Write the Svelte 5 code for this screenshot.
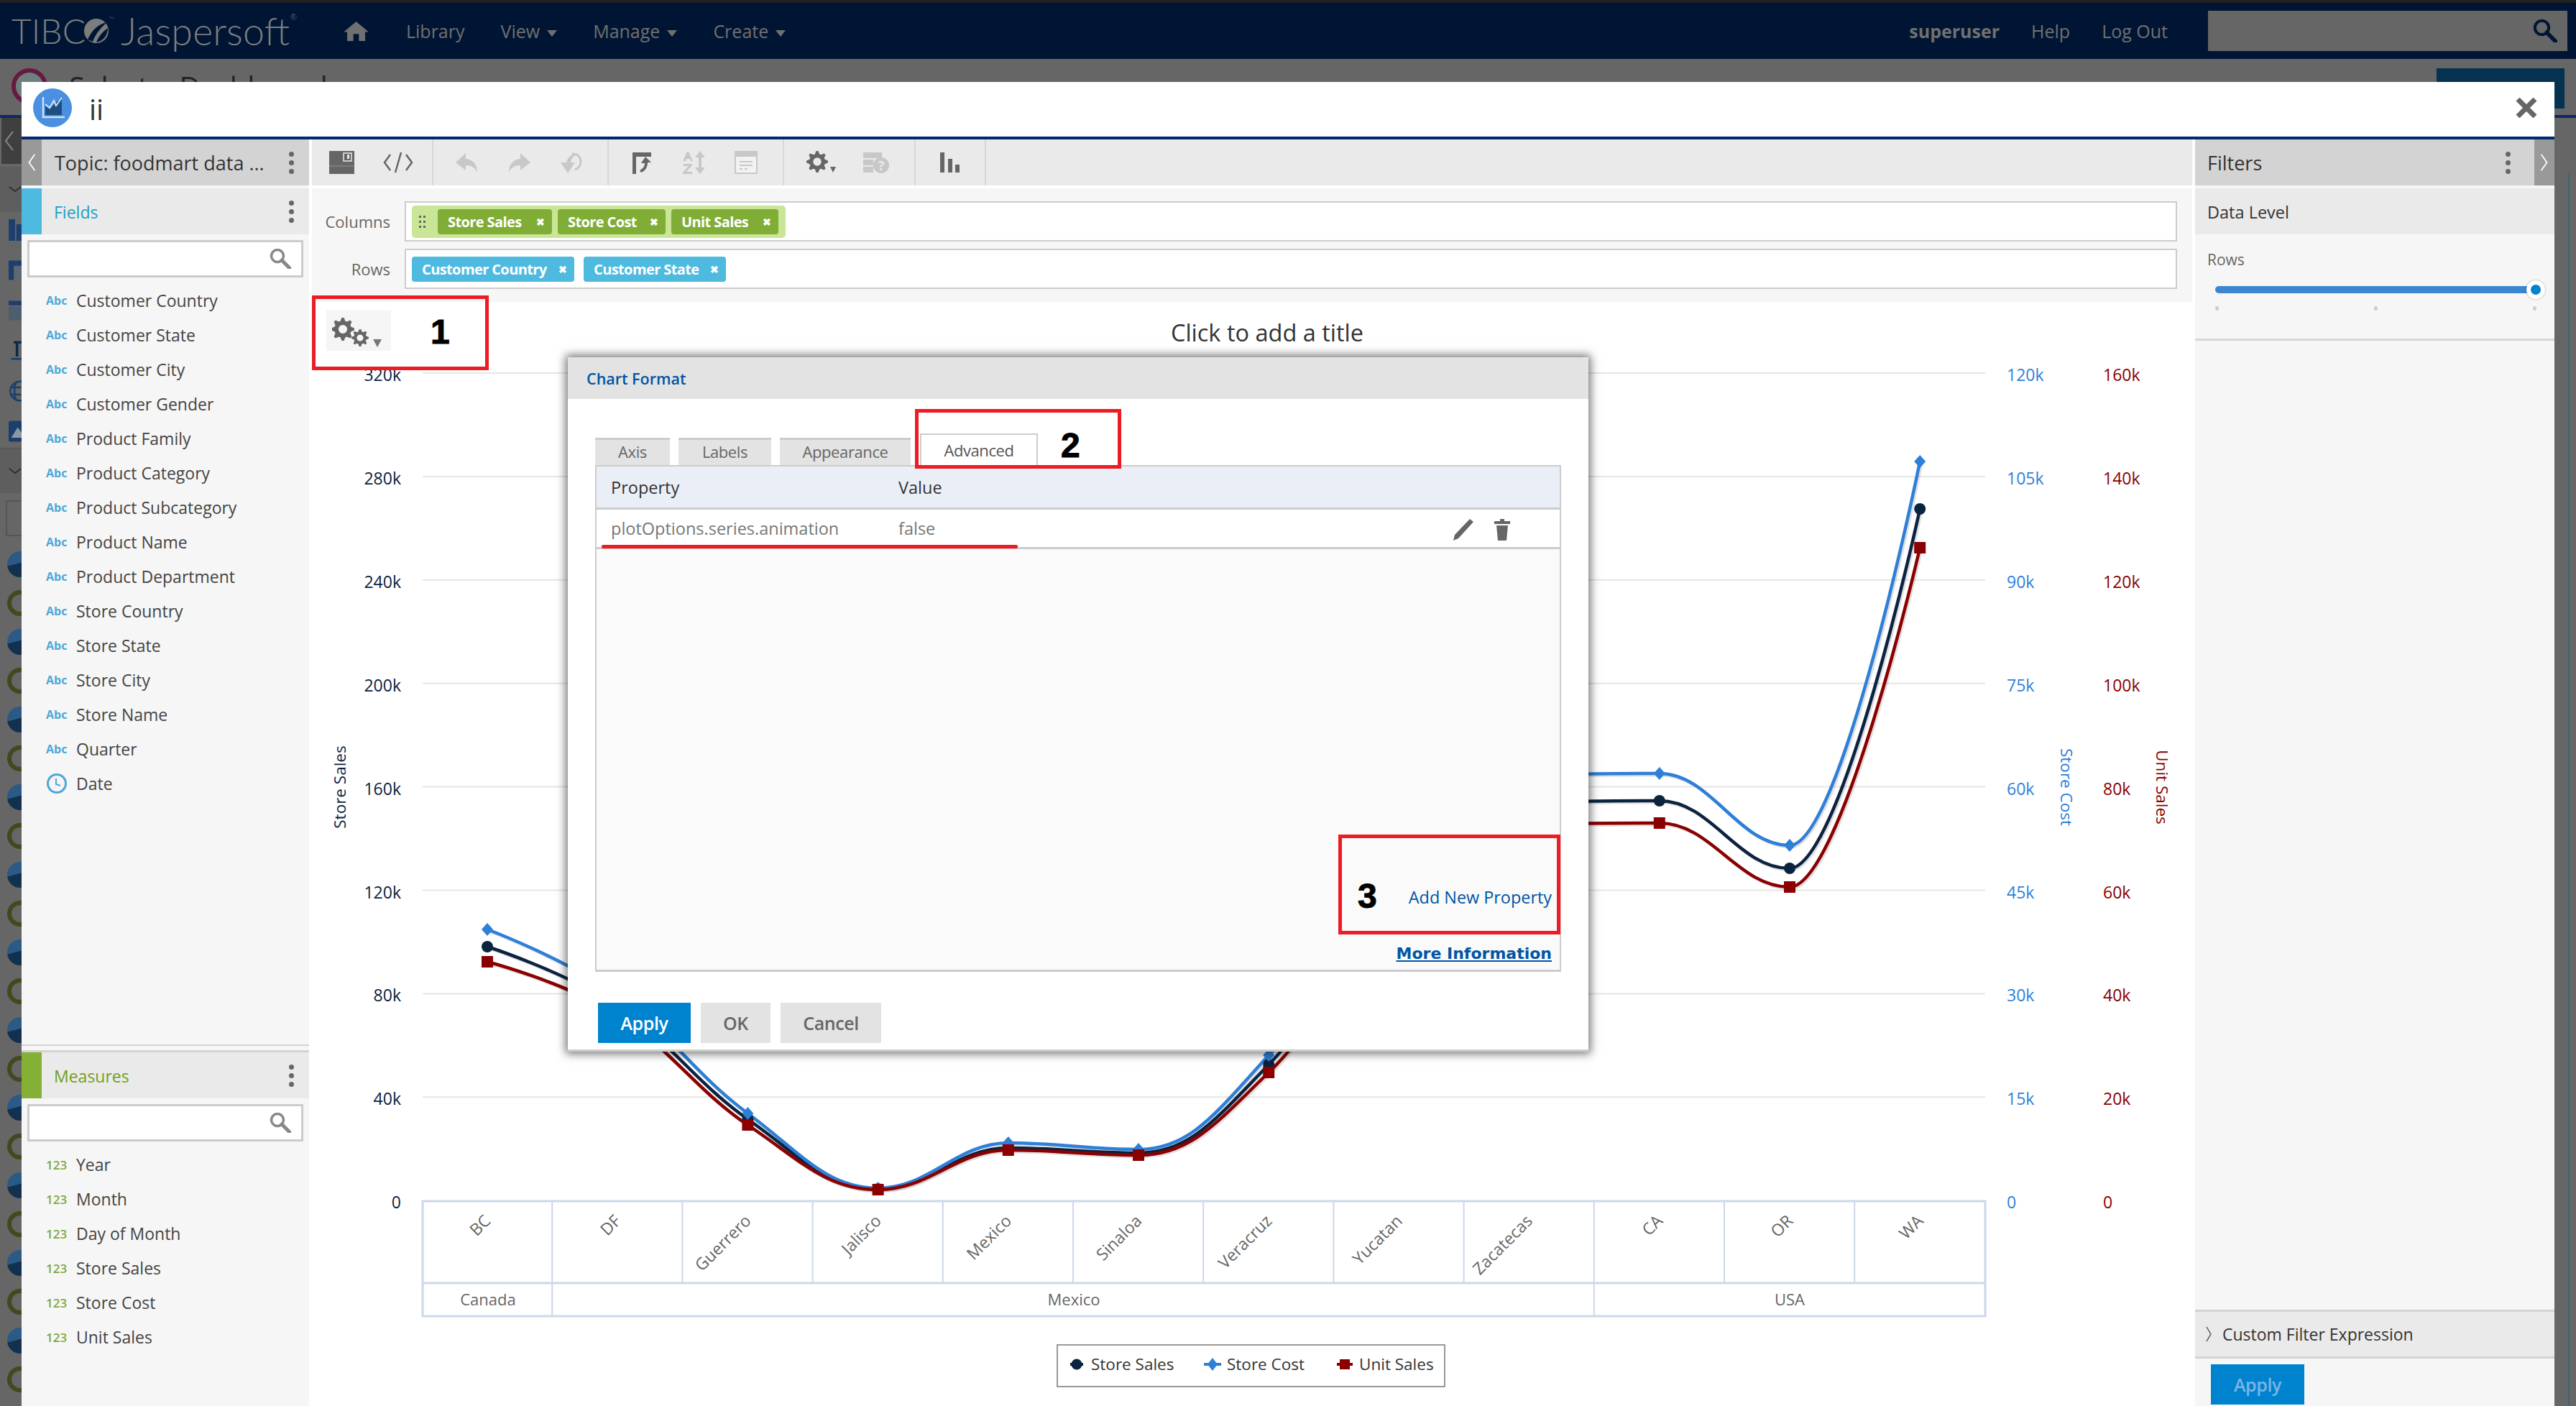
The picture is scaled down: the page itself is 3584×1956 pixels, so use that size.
<script>
  const dimensions = ['Customer Country','Customer State','Customer City','Customer Gender','Product Family','Product Category','Product Subcategory','Product Name','Product Department','Store Country','Store State','Store City','Store Name','Quarter'];
  const measures = ['Year','Month','Day of Month','Store Sales','Store Cost','Unit Sales'];
  const states = ['BC','DF','Guerrero','Jalisco','Mexico','Sinaloa','Veracruz','Yucatan','Zacatecas','CA','OR','WA'];

  const colW = 181.2;
  const xs = states.map((_, i) => 678 + colW * i);
  const gridY = Array.from({ length: 9 }, (_, i) => 519 + 143.9 * i);
  const leftTicks = ['320k','280k','240k','200k','160k','120k','80k','40k','0'];
  const blueTicks = ['120k','105k','90k','75k','60k','45k','30k','15k','0'];
  const redTicks = ['160k','140k','120k','100k','80k','60k','40k','20k','0'];

  const series = [
    { name: 'sales', color: '#0c2340', ys: [1317,1400,1557,1654,1597,1604,1481,1232,1118,1114,1208,708] },
    { name: 'cost', color: '#2e7fd8', ys: [1293,1385,1549,1653,1590,1599,1468,1205,1080,1076,1176,642] },
    { name: 'units', color: '#8b0000', ys: [1338,1412,1565,1655,1600,1607,1492,1258,1147,1145,1234,762] }
  ];

  // same control point maths as a highcharts spline
  function controls(ys, i) {
    const x = xs[i], y = ys[i], lx = xs[i - 1], ly = ys[i - 1], nx = xs[i + 1], ny = ys[i + 1];
    const leftX = (1.5 * x + lx) / 2.5, rightX = (1.5 * x + nx) / 2.5;
    let leftY = (1.5 * y + ly) / 2.5, rightY = (1.5 * y + ny) / 2.5;
    const fix = ((rightY - leftY) * (rightX - x)) / (rightX - leftX) + y - rightY;
    leftY += fix;
    rightY += fix;
    if (leftY > ly && leftY > y) { leftY = Math.max(ly, y); rightY = 2 * y - leftY; }
    else if (leftY < ly && leftY < y) { leftY = Math.min(ly, y); rightY = 2 * y - leftY; }
    if (rightY > ny && rightY > y) { rightY = Math.max(ny, y); leftY = 2 * y - rightY; }
    else if (rightY < ny && rightY < y) { rightY = Math.min(ny, y); leftY = 2 * y - rightY; }
    return { leftX, leftY, rightX, rightY };
  }

  function spline(ys) {
    let d = `M${xs[0]} ${ys[0]}`;
    for (let i = 1; i < xs.length; i++) {
      const a = i > 1 ? controls(ys, i - 1) : { rightX: xs[0], rightY: ys[0] };
      const b = i < xs.length - 1 ? controls(ys, i) : { leftX: xs[i], leftY: ys[i] };
      d += ` C${a.rightX.toFixed(1)} ${a.rightY.toFixed(1)} ${b.leftX.toFixed(1)} ${b.leftY.toFixed(1)} ${xs[i].toFixed(1)} ${ys[i]}`;
    }
    return d;
  }

  function gear(cx, cy, r, teeth) {
    const pts = [];
    for (let i = 0; i < teeth * 4; i++) {
      const a = (i / (teeth * 4)) * Math.PI * 2 - Math.PI / (teeth * 4);
      const rr = i % 4 < 2 ? r : r * 0.74;
      pts.push(`${(cx + rr * Math.cos(a)).toFixed(1)} ${(cy + rr * Math.sin(a)).toFixed(1)}`);
    }
    const h = r * 0.38;
    return `M${pts.join('L')}Z M${cx - h} ${cy}a${h} ${h} 0 1 0 ${h * 2} 0a${h} ${h} 0 1 0 ${-h * 2} 0Z`;
  }

  const behindIcons = Array.from({ length: 22 }, (_, i) => (i % 2 ? 'olive' : 'hill'));
</script>

{#snippet kebab()}
  <span class="kebab"><i></i><i></i><i></i></span>
{/snippet}

{#snippet searchIcon(cls)}
  <svg class={cls} viewBox="0 0 30 28">
    <circle cx="11" cy="10" r="8.5" fill="none" stroke="currentColor" stroke-width="3.5" />
    <path d="M17 16l11 11" stroke="currentColor" stroke-width="5" stroke-linecap="round" />
  </svg>
{/snippet}

{#snippet searchBox()}
  <div class="search">{@render searchIcon('search-glyph')}</div>
{/snippet}

<div class="page">
  <header class="nav">
    <div class="logo">
      <span>TIBC</span>
      <svg class="logo-o" viewBox="0 0 36 36">
        <circle cx="18" cy="18" r="17" fill="#7d7d7d" />
        <path d="M6 30C12 16 22 8 33 6C26 12 18 20 13 33ZM18 34C21 26 26 20 34 14C34 24 28 32 18 34Z" fill="#001534" />
      </svg>
      <sup class="tm">™</sup>
      <span class="logo-j">Jaspersoft</span>
      <sup class="reg">®</sup>
    </div>
    <svg class="home" viewBox="0 0 36 28"><path d="M18 0L36 15H31V28H22V18H14V28H5V15H0Z" fill="#707070" /></svg>
    <nav class="menu">
      <span>Library</span>
      <span>View<b class="caret"></b></span>
      <span>Manage<b class="caret"></b></span>
      <span>Create<b class="caret"></b></span>
    </nav>
    <div class="user">
      <strong>superuser</strong>
      <span>Help</span>
      <span>Log Out</span>
    </div>
    <div class="nav-search">{@render searchIcon('nav-glyph')}</div>
  </header>

  <div class="stage">
    <div class="behind">
      <div class="behind-head">
        <span class="behind-logo"></span>
        <span class="behind-title">Select a Dashboard</span>
        <span class="behind-btn"></span>
      </div>
      <div class="behind-strip">
        <div class="behind-handle"><svg viewBox="0 0 14 30"><path d="M12 2L2 15l10 13" fill="none" stroke="#8a8a8a" stroke-width="2" /></svg></div>
        <div class="behind-row"><svg viewBox="0 0 20 10"><path d="M1 1l9 7 9-7" fill="none" stroke="#2b2b2b" stroke-width="2" /></svg></div>
        <div class="widget-icons">
          <svg viewBox="0 0 20 34"><path d="M0 0h10v34H0zM12 8h8v26h-8z" fill="#1c3f6e" /></svg>
          <svg viewBox="0 0 20 30"><path d="M0 0h20v8H8v22H0z" fill="#1c3f6e" /><path d="M10 10h10v18H10z" fill="#5b6877" /></svg>
          <svg viewBox="0 0 20 30"><path d="M0 0h20v7H0z" fill="#1c3f6e" /><path d="M0 9h20v21H0z" fill="#4f5d6e" /></svg>
          <svg viewBox="0 0 20 30"><path d="M8 0h12v4h-5v20h-4V4H8z" fill="#12284a" /><path d="M4 26h16v3H4z" fill="#1c3f6e" /></svg>
          <svg viewBox="0 0 20 36"><circle cx="18" cy="18" r="16" fill="none" stroke="#1c3f6e" stroke-width="3" /><path d="M2 12h18M2 24h18M12 2C8 12 8 24 12 34" fill="none" stroke="#1c3f6e" stroke-width="3" /></svg>
          <svg viewBox="0 0 20 32"><path d="M2 0h18v32H2a2 2 0 0 1-2-2V2a2 2 0 0 1 2-2z" fill="#1c3f6e" /><path d="M4 26L14 10l6 8v8z" fill="#8b97a3" /></svg>
        </div>
        <div class="behind-row second"><svg viewBox="0 0 20 10"><path d="M1 1l9 7 9-7" fill="none" stroke="#2b2b2b" stroke-width="2" /></svg></div>
        <div class="behind-search"></div>
        <div class="resource-icons">
          {#each behindIcons as kind}
            <span class={kind}></span>
          {/each}
        </div>
      </div>
      <div class="behind-right"></div>
    </div>

    <section class="modal">
      <div class="modal-head">
        <svg class="report-icon" viewBox="0 0 54 54">
          <circle cx="27" cy="27" r="27" fill="#4a8fe0" />
          <path d="M14 12v28h30" fill="none" stroke="#cfe0f4" stroke-width="2.5" />
          <path d="M17 37V24l6 5 8-9 9-6v23z" fill="#1f4f80" />
          <path d="M17 22l6 5 6-10 3 7 8-11" fill="none" stroke="#cfe6fb" stroke-width="2" />
        </svg>
        <span class="modal-title">ii</span>
        <svg class="close" viewBox="0 0 30 28"><path d="M3 2l24 24M27 2L3 26" stroke="#666" stroke-width="7" /></svg>
      </div>

      <div class="designer">
        <aside class="left">
          <div class="panel-top">
            <span class="handle"><svg viewBox="0 0 14 30"><path d="M12 2L3 15l9 13" fill="none" stroke="#fff" stroke-width="2" /></svg></span>
            <span class="panel-name">Topic: foodmart data ...</span>
            {@render kebab()}
          </div>
          <div class="fields">
            <div class="section-head"><span class="strip"></span><span class="section-name blue">Fields</span>{@render kebab()}</div>
            {@render searchBox()}
            <ul class="list">
              {#each dimensions as item}
                <li><span class="kind abc">Abc</span>{item}</li>
              {/each}
              <li>
                <svg class="clock" viewBox="0 0 30 30"><circle cx="15" cy="15" r="12.5" fill="none" stroke="#4ba8d8" stroke-width="3" /><path d="M14 8v8l6 2" fill="none" stroke="#4ba8d8" stroke-width="2" /></svg>Date
              </li>
            </ul>
          </div>
          <div class="measures">
            <div class="section-head"><span class="strip green"></span><span class="section-name olive-text">Measures</span>{@render kebab()}</div>
            {@render searchBox()}
            <ul class="list">
              {#each measures as item}
                <li><span class="kind num">123</span>{item}</li>
              {/each}
            </ul>
          </div>
        </aside>

        <main class="center">
          <div class="toolbar">
            <div class="tool-group first">
              <svg class="t-save" viewBox="0 0 35 32"><path d="M0 0h35v32H0z" fill="#666" /><path d="M20 3h11v11H20z" fill="none" stroke="#eaeaea" stroke-width="1.500" /><path d="M25 5h3v6h-3z" fill="#eaeaea" /><path d="M0 21h35" stroke="#7b7b7b" stroke-width="2" /></svg>
              <svg class="t-code" viewBox="0 0 42 32"><path d="M10 5L2 16l8 11M32 5l8 11-8 11M25 2l-8 28" fill="none" stroke="#666" stroke-width="2.5" /></svg>
            </div>
            <div class="tool-group">
              <svg class="t-32" viewBox="0 0 32 32"><path d="M14 3L0 16l14 11v-7c8 0 13 3 16 10 0-12-6-18-16-19z" fill="#c8c8c8" /></svg>
              <svg class="t-32" viewBox="0 0 32 32"><path d="M18 3l14 13-14 11v-7C10 20 5 23 2 30c0-12 6-18 16-19z" fill="#c8c8c8" /></svg>
              <svg class="t-32" viewBox="0 0 32 32"><path d="M12 31L2 16h8C12 8 18 3 28 4c-8 2-11 6-12 12h6z" fill="#c8c8c8" /><path d="M18 4c8 0 12 5 12 11 0 5-3 9-8 11" fill="none" stroke="#c8c8c8" stroke-width="3" /></svg>
            </div>
            <div class="tool-group">
              <svg class="t-32" viewBox="0 0 32 32"><path d="M2 2h26v6H7v24H2z" fill="#666" /><path d="M14 30c6-2 9-8 9-14h5l-8-8-6 9h5c0 5-3 8-7 10z" fill="#666" /></svg>
              <svg class="t-32" viewBox="0 0 32 32"><path d="M0 14L6 1h2l6 13h-3l-1-3H5l-1 3zM1 18h12v2l-8 9h8v3H0v-2l8-9H1z" fill="#c8c8c8" /><path d="M24 0l7 9h-5v14h5l-7 9-7-9h5V9h-5z" fill="#c8c8c8" /></svg>
              <svg class="t-32" viewBox="0 0 32 32"><path d="M1 1h30v30H1z" fill="#f2f2f2" stroke="#c8c8c8" stroke-width="2" /><path d="M2 2h28v6H2zM7 14h18v2H7zM7 19h18v2H7zM7 24h4v2H7zM14 24h4v2h-4z" fill="#c8c8c8" /></svg>
            </div>
            <div class="tool-group">
              <svg class="t-gear" viewBox="0 0 42 32"><path d={gear(15, 15, 15, 8)} fill="#666" fill-rule="evenodd" /><path d="M33 22h8l-4 8z" fill="#666" /></svg>
              <svg class="t-db" viewBox="0 0 36 32"><path d="M0 2h26v8H0zM0 12h14v8H0zM0 22h14v8H0z" fill="#c8c8c8" /><circle cx="25" cy="20" r="11" fill="#c8c8c8" /><text class="t-q" x="25" y="27">?</text></svg>
            </div>
            <div class="tool-group last">
              <svg class="t-bars" viewBox="0 0 27 28"><path d="M0 0h6v28H0zM11 9h6v19h-6zM21 17h6v11h-6z" fill="#666" /></svg>
            </div>
          </div>

          <div class="shelves">
            <span class="shelf-label">Columns</span>
            <div class="shelf">
              <div class="pill-group">
                <span class="grip"><i></i><i></i><i></i><i></i><i></i><i></i></span>
                <span class="pill lime w-sales">Store Sales<b>✖</b></span>
                <span class="pill lime w-cost">Store Cost<b>✖</b></span>
                <span class="pill lime w-units">Unit Sales<b>✖</b></span>
              </div>
            </div>
            <span class="shelf-label">Rows</span>
            <div class="shelf">
              <span class="pill sky w-country">Customer Country<b>✖</b></span>
              <span class="pill sky w-state">Customer State<b>✖</b></span>
            </div>
          </div>

          <div class="chart">
            <svg class="plot" viewBox="434 420 2616 1536" preserveAspectRatio="none">
              <text class="title" x="1763" y="475">Click to add a title</text>

              {#each gridY as y, i}
                {#if i < 8}
                  <path class="grid" d="M588 {y.toFixed(1)}H2762" />
                {/if}
                <text class="tick navy-fill end" x="558" y={y + 11}>{leftTicks[i]}</text>
                <text class="tick blue-fill" x="2792" y={y + 11}>{blueTicks[i]}</text>
                <text class="tick red-fill" x="2926" y={y + 11}>{redTicks[i]}</text>
              {/each}

              <text class="axis navy-fill" transform="translate(481 1095) rotate(-90)">Store Sales</text>
              <text class="axis blue-fill" transform="translate(2867 1095) rotate(90)">Store Cost</text>
              <text class="axis red-fill" transform="translate(3000 1095) rotate(90)">Unit Sales</text>

              <path class="frame" d="M588 1671H2762V1831H588ZM588 1785H2762" />
              {#each states as name, i}
                {#if i > 0}
                  <path class="cell" d="M{(587 + colW * i).toFixed(1)} 1671V{i === 1 || i === 9 ? 1831 : 1785}" />
                {/if}
                <text class="cat" transform="translate({(xs[i] + 6).toFixed(1)} 1700) rotate(-45)">{name}</text>
              {/each}
              <text class="country" x="679" y="1816">Canada</text>
              <text class="country" x="1494" y="1816">Mexico</text>
              <text class="country" x="2490" y="1816">USA</text>

              {#each series as s}
                <path class="line-shadow" d={spline(s.ys)} transform="translate(2 2)" />
                <path class="line" d={spline(s.ys)} stroke={s.color} />
              {/each}
              {#each xs as x, i}
                <circle cx={x} cy={series[0].ys[i]} r="8" fill="#0c2340" />
                <path d="M{x} {series[1].ys[i] - 9}l8 9-8 9-8-9z" fill="#2e7fd8" />
                <rect x={x - 8} y={series[2].ys[i] - 8} width="16" height="16" fill="#8b0000" />
              {/each}

              <rect class="legend-box" x="1471" y="1871" width="539" height="58" />
              <circle cx="1498" cy="1898" r="7.5" fill="#0c2340" />
              <rect x="1489" y="1896" width="18" height="4" fill="#0c2340" />
              <text class="legend" x="1518" y="1906">Store Sales</text>
              <path d="M1687 1889l7 9-7 9-7-9z" fill="#2e7fd8" />
              <rect x="1675" y="1896" width="24" height="4" fill="#2e7fd8" />
              <text class="legend" x="1707" y="1906">Store Cost</text>
              <rect x="1864" y="1891" width="14" height="14" fill="#8b0000" />
              <rect x="1860" y="1896" width="22" height="4" fill="#8b0000" />
              <text class="legend" x="1891" y="1906">Unit Sales</text>
            </svg>

            <button class="chart-gear">
              <svg viewBox="0 0 76 46"><path d={gear(15, 17, 16, 8)} fill="#666" fill-rule="evenodd" /><path d={gear(39, 29, 12, 8)} fill="#666" fill-rule="evenodd" /><path d="M57 31h12l-6 11z" fill="#777" /></svg>
            </button>
            <div class="mark box-one"><span class="mark-num">1</span></div>

            <div class="dialog">
              <div class="dialog-head">Chart Format</div>
              <div class="tabs">
                <span class="tab axis-tab">Axis</span>
                <span class="tab labels-tab">Labels</span>
                <span class="tab look-tab">Appearance</span>
                <span class="tab active">Advanced</span>
              </div>
              <span class="mark box-two"><span class="mark-num">2</span></span>
              <div class="props">
                <div class="props-row head"><span>Property</span><span>Value</span></div>
                <div class="props-row item">
                  <span>plotOptions.series.animation</span><span>false</span>
                  <svg class="pencil" viewBox="0 0 30 30"><path d="M24 0l5 4L8 27l-7 3 2-8z" fill="#666" /></svg>
                  <svg class="trash" viewBox="0 0 22 30"><path d="M8 0h6v3h8v4H0V3h8zM3 9h16l-2 21H5z" fill="#666" /></svg>
                  <span class="underline"></span>
                </div>
                <div class="props-empty">
                  <span class="mark box-three"><span class="mark-num">3</span></span>
                  <a class="add-link" href="#add">Add New Property</a>
                  <a class="more-link" href="#more">More Information</a>
                </div>
              </div>
              <div class="dialog-actions">
                <button class="btn primary">Apply</button>
                <button class="btn ok">OK</button>
                <button class="btn cancel">Cancel</button>
              </div>
            </div>
          </div>
        </main>

        <aside class="right">
          <div class="panel-top filters-top">
            <span class="panel-name">Filters</span>
            {@render kebab()}
            <span class="handle"><svg viewBox="0 0 14 30"><path d="M2 2l9 13-9 13" fill="none" stroke="#fff" stroke-width="2" /></svg></span>
          </div>
          <div class="filter-title">Data Level</div>
          <div class="filter-body">
            <div class="level">
              <span class="level-label">Rows</span>
              <div class="slider"><span class="knob"></span></div>
              <div class="slider-ticks"><i></i><i></i><i></i></div>
            </div>
          </div>
          <div class="custom-head">
            <svg viewBox="0 0 10 24"><path d="M2 2l6 10-6 10" fill="none" stroke="#666" stroke-width="1.500" /></svg>
            Custom Filter Expression
          </div>
          <div class="filter-foot"><button class="btn apply-off">Apply</button></div>
        </aside>
      </div>
    </section>
  </div>
</div>

<style>
  :global(body) {
    margin: 0;
    background: #666;
    font-family: "Open Sans", "Noto Sans", sans-serif;
  }
  * { box-sizing: border-box; }
  ul { list-style: none; margin: 0; padding: 0; }
  button { border: 0; font-family: inherit; padding: 0; }

  .page {
    height: 100vh;
    display: flex;
    flex-direction: column;
    overflow: hidden;
  }

  /* top nav */
  .nav {
    height: 82px;
    flex: none;
    display: flex;
    align-items: center;
    background: #001534;
    border-top: 4px solid #222;
    color: #707070;
    font-size: 25px;
    padding-left: 16px;
  }
  .logo {
    width: 462px;
    flex: none;
    display: flex;
    align-items: center;
    font-family: "Lato", sans-serif;
    font-weight: 300;
    font-size: 48px;
    color: #7d7d7d;
    line-height: 1;
  }
  .logo-o { width: 36px; height: 36px; margin-left: -3px; }
  .tm { font-size: 9px; align-self: flex-start; margin-top: 6px; width: 13px; }
  .logo-j { font-size: 54px; margin-left: 3px; }
  .reg { font-size: 12px; align-self: flex-start; margin-top: 2px; }
  .home { width: 35px; height: 27px; }
  .menu {
    display: flex;
    gap: 50px;
    margin-left: 52px;
  }
  .caret {
    display: inline-block;
    border: 7px solid transparent;
    border-top: 9px solid #707070;
    border-bottom: 0;
    margin-left: 10px;
    vertical-align: 2px;
  }
  .user {
    margin-left: auto;
    display: flex;
    gap: 44px;
    margin-right: 56px;
  }
  .nav-search {
    width: 500px;
    height: 56px;
    margin-right: 12px;
    background: #666;
    display: flex;
    align-items: center;
    justify-content: flex-end;
    padding-right: 14px;
    color: #001534;
  }
  .nav-glyph { width: 34px; height: 32px; }

  /* page behind the modal */
  .stage { flex: 1; position: relative; min-height: 0; }
  .behind { height: 100%; position: relative; background: #666; }
  .behind-head {
    height: 82px;
    display: flex;
    align-items: flex-start;
    padding: 13px 16px 0 16px;
    border-bottom: 4px solid #0c2a60;
  }
  .behind-logo {
    width: 50px;
    height: 50px;
    border-radius: 50%;
    border: 6px solid #651a42;
    background: #6f7f7f;
  }
  .behind-title {
    font-size: 40px;
    line-height: 19px;
    color: #222;
    margin-left: 30px;
    margin-top: 16px;
  }
  .behind-btn {
    margin-left: auto;
    width: 178px;
    height: 56px;
    background: #04324f;
  }
  .behind-strip { width: 30px; overflow: hidden; }
  .behind-handle {
    height: 64px;
    margin-left: 2px;
    background: #3f3f3f;
    display: flex;
    align-items: center;
    padding-left: 4px;
  }
  .behind-handle svg { width: 14px; height: 30px; }
  .behind-row {
    height: 63px;
    margin-top: 4px;
    background: #5e5e5e;
    display: flex;
    align-items: center;
    padding-left: 12px;
  }
  .behind-row svg { width: 18px; height: 9px; flex: none; }
  .behind-row.second { margin-top: 0; border-top: 1px solid #555; }
  .widget-icons {
    height: 328px;
    padding: 10px 0 0 12px;
    display: flex;
    flex-direction: column;
    gap: 26px;
  }
  .widget-icons svg { width: 18px; height: 30px; flex: none; }
  .behind-search {
    width: 40px;
    height: 50px;
    margin: 10px 0 0 8px;
    border: 2px solid #555;
  }
  .resource-icons {
    margin: 21px 0 0 10px;
    display: flex;
    flex-direction: column;
    gap: 18px;
  }
  .resource-icons span {
    width: 36px;
    height: 36px;
    border-radius: 50%;
    flex: none;
  }
  .hill { background: linear-gradient(165deg, #2c5a86 45%, #12314f 46%); }
  .olive { background: #666; border: 6px solid #3f4a1e; }
  .behind-right {
    position: absolute;
    right: 9px;
    top: 158px;
    bottom: 0;
    width: 2px;
    background: #3d6478;
  }

  /* modal */
  .modal {
    position: absolute;
    left: 30px;
    right: 30px;
    top: 32px;
    bottom: 0;
    background: #fff;
    display: flex;
    flex-direction: column;
  }
  .modal-head {
    height: 80px;
    flex: none;
    display: flex;
    align-items: center;
    padding: 0 24px 4px 16px;
    border-bottom: 4px solid #002a6e;
  }
  .report-icon { width: 54px; height: 54px; }
  .modal-title {
    font-size: 40px;
    color: #333;
    margin: 4px 0 0 24px;
    line-height: 1;
  }
  .close { width: 30px; height: 28px; margin-left: auto; }

  .designer {
    flex: 1;
    min-height: 0;
    display: grid;
    grid-template-columns: 400px 1fr 500px;
    column-gap: 4px;
  }

  .panel-top {
    height: 64px;
    flex: none;
    background: #d3d3d3;
    display: flex;
    align-items: center;
    margin-bottom: 4px;
  }
  .handle {
    width: 28px;
    height: 100%;
    background: #999;
    display: flex;
    align-items: center;
    justify-content: center;
    flex: none;
  }
  .handle svg { width: 14px; height: 26px; }
  .panel-name {
    font-size: 27px;
    color: #333;
    margin-left: 18px;
    white-space: nowrap;
  }
  .filters-top .panel-name { margin-left: 17px; }
  .kebab {
    margin-left: auto;
    margin-right: 21px;
    display: flex;
    flex-direction: column;
    gap: 5px;
  }
  .kebab i {
    width: 7px;
    height: 7px;
    border-radius: 50%;
    background: #666;
  }

  .left { display: flex; flex-direction: column; min-height: 0; background: #f6f6f6; }
  .fields { flex: 1; min-height: 0; border-bottom: 2px solid #d3d3d3; }
  .measures {
    height: 495px;
    flex: none;
    margin-top: 6px;
    border-top: 3px solid #d3d3d3;
  }
  .section-head {
    height: 64px;
    background: #eaeaea;
    display: flex;
    align-items: center;
  }
  .strip { width: 28px; height: 100%; background: #4fbadf; }
  .strip.green { background: #84b135; }
  .section-name { font-size: 23px; margin-left: 17px; padding-top: 2px; }
  .blue { color: #1a9fc8; }
  .olive-text { color: #6ea01f; }
  .search {
    height: 52px;
    margin: 8px 8px 9px;
    border: 3px solid #ccc;
    background: #fff;
    display: flex;
    align-items: center;
    justify-content: flex-end;
    padding-right: 14px;
    color: #888;
  }
  .search-glyph { width: 30px; height: 28px; }
  .list li {
    height: 48px;
    display: flex;
    align-items: center;
    padding: 0 0 2px 34px;
    font-size: 23px;
    color: #444;
  }
  .kind { width: 42px; flex: none; }
  .abc { font-size: 16px; font-weight: 700; color: #4ba8d8; }
  .num { font-size: 17px; font-weight: 600; color: #7fa93b; }
  .clock { width: 30px; height: 30px; margin-right: 12px; }

  /* center */
  .center { display: flex; flex-direction: column; min-width: 0; min-height: 0; }
  .toolbar {
    height: 64px;
    flex: none;
    background: #eaeaea;
    display: flex;
    margin-bottom: 4px;
  }
  .tool-group {
    display: flex;
    align-items: center;
    gap: 40px;
    padding: 0 35px 0 31px;
    border-right: 2px solid #d8d8d8;
  }
  .tool-group.first { padding: 0 26px 0 24px; }
  .tool-group.last { padding: 0 35px 0 34px; }
  .t-save { width: 35px; height: 32px; }
  .t-code { width: 42px; height: 32px; }
  .t-32 { width: 32px; height: 32px; }
  .t-gear { width: 42px; height: 32px; }
  .t-db { width: 36px; height: 32px; margin-left: -3px; }
  .t-q { font-size: 18px; font-weight: 700; text-anchor: middle; fill: #eaeaea; }
  .t-bars { width: 27px; height: 28px; }

  .shelves {
    height: 158px;
    flex: none;
    background: #f6f6f6;
    padding: 18px 21px 0 0;
    display: grid;
    grid-template-columns: 109px 1fr;
    grid-auto-rows: 56px;
    column-gap: 20px;
    row-gap: 10px;
    align-items: center;
  }
  .shelf-label { text-align: right; font-size: 22px; color: #666; }
  .shelf {
    height: 56px;
    background: #fff;
    border: 2px solid #ccc;
    display: flex;
    align-items: center;
    padding-left: 8px;
    gap: 13px;
  }
  .pill-group {
    height: 45px;
    display: flex;
    align-items: center;
    gap: 8px;
    padding: 0 10px;
    background: #c9e596;
    border-radius: 5px;
  }
  .grip {
    width: 8px;
    display: grid;
    grid-template-columns: 3px 3px;
    gap: 4px 3px;
    margin-right: 10px;
  }
  .grip i { width: 3px; height: 3px; background: #666; }
  .pill {
    height: 35px;
    border-radius: 4px;
    color: #fff;
    font-size: 20px;
    font-weight: 700;
    padding: 0 10px 0 14px;
    display: flex;
    align-items: center;
    justify-content: space-between;
    white-space: nowrap;
    letter-spacing: -0.6px;
  }
  .pill b { font-size: 14px; margin-right: 1px; }
  .lime { background: #80ad35; }
  .sky { background: #4fbadf; }
  .w-sales { width: 159px; }
  .w-cost { width: 150px; }
  .w-units { width: 149px; }
  .w-country { width: 226px; }
  .w-state { width: 198px; }

  /* chart */
  .chart { flex: 1; position: relative; min-height: 0; }
  .plot { width: 100%; height: 100%; display: block; }
  .plot text { font-family: "Open Sans", sans-serif; }
  .title { font-size: 32.5px; fill: #333; text-anchor: middle; }
  .grid { stroke: #e6e6e6; stroke-width: 2; fill: none; }
  .tick { font-size: 23px; }
  .end { text-anchor: end; }
  .navy-fill { fill: #0c2340; }
  .blue-fill { fill: #2e7fd8; }
  .red-fill { fill: #8b0000; }
  .axis { font-size: 22.5px; text-anchor: middle; }
  .frame { fill: none; stroke: #ccd7ea; stroke-width: 3; }
  .cell { stroke: #ccd7ea; stroke-width: 2; }
  .cat { font-size: 23px; fill: #666; text-anchor: end; }
  .country { font-size: 22px; fill: #666; text-anchor: middle; }
  .line { fill: none; stroke-width: 4.5; }
  .line-shadow { fill: none; stroke: #000; stroke-opacity: 0.12; stroke-width: 5; }
  .legend-box { fill: #fff; stroke: #999; stroke-width: 2; }
  .legend { font-size: 22.5px; fill: #333; }

  .chart-gear {
    position: absolute;
    left: 20px;
    top: 12px;
    width: 90px;
    height: 56px;
    background: #f5f5f5;
    padding: 8px 0 0 8px;
    display: block;
  }
  .chart-gear svg { width: 76px; height: 46px; display: block; }

  .mark {
    position: absolute;
    z-index: 3;
    border: 5px solid #ed1c24;
    pointer-events: none;
  }
  .mark-num {
    position: absolute;
    font-family: "Liberation Sans", Arial, sans-serif;
    font-weight: 700;
    font-size: 48px;
    line-height: 1;
    color: #000;
    -webkit-text-stroke: 1px #000;
  }
  .box-one { left: 0; top: -9px; width: 246px; height: 104px; }
  .box-one .mark-num { left: 160px; top: 22px; }

  .dialog {
    position: absolute;
    left: 356px;
    top: 77px;
    width: 1420px;
    height: 966px;
    background: #fff;
    border-bottom: 3px solid #ccc;
    box-shadow: 0 0 12px 3px rgba(0, 0, 0, 0.55);
    display: flex;
    flex-direction: column;
  }
  .dialog-head {
    height: 58px;
    flex: none;
    background: #e3e3e3;
    color: #0055a5;
    font-size: 21.5px;
    font-weight: 600;
    padding: 15px 0 0 26px;
  }
  .tabs {
    height: 92px;
    flex: none;
    display: flex;
    align-items: flex-end;
    gap: 12px;
    padding-left: 38px;
  }
  .tab {
    height: 38px;
    background: #e3e3e3;
    border-top: 3px solid #ccc;
    color: #666;
    font-size: 22px;
    letter-spacing: -0.4px;
    display: flex;
    align-items: center;
    justify-content: center;
    padding-bottom: 3px;
  }
  .axis-tab { width: 104px; }
  .labels-tab { width: 129px; }
  .look-tab { width: 182px; }
  .tab.active {
    width: 164px;
    height: 44px;
    background: #fff;
    border: 2px solid #ccc;
    border-bottom: 0;
    margin-left: 1px;
    color: #555;
    padding-bottom: 0;
  }
  .box-two { left: 483px; top: 72px; width: 287px; height: 83px; }
  .box-two .mark-num { left: 198px; top: 22px; }

  .props {
    flex: none;
    height: 705px;
    margin: 0 38px;
    border: 2px solid #ccc;
    border-bottom-width: 3px;
    display: flex;
    flex-direction: column;
  }
  .props-row {
    position: relative;
    display: grid;
    grid-template-columns: 400px 1fr;
    align-items: center;
    padding-left: 20px;
    font-size: 23.5px;
    flex: none;
    border-bottom: 3px solid #ccc;
  }
  .head { height: 60px; background: #eaeff7; color: #333; }
  .item { height: 55px; background: #fff; color: #777; }
  .pencil { position: absolute; right: 119px; top: 13px; width: 30px; height: 30px; }
  .trash { position: absolute; right: 69px; top: 13px; width: 22px; height: 30px; }
  .underline {
    position: absolute;
    left: 7px;
    bottom: -2px;
    width: 579px;
    height: 5px;
    border-radius: 2px;
    background: #ed1c24;
  }
  .props-empty {
    flex: 1;
    position: relative;
    background: #fafafa;
  }
  .box-three { right: -1px; top: 397px; width: 309px; height: 139px; }
  .box-three .mark-num { left: 22px; top: 57px; }
  .add-link {
    position: absolute;
    right: 11px;
    top: 468px;
    font-size: 23.400px;
    color: #0055a5;
    text-decoration: none;
  }
  .more-link {
    position: absolute;
    right: 11px;
    top: 550px;
    font-family: "DejaVu Sans", sans-serif;
    font-size: 22px;
    font-weight: 700;
    color: #0055a5;
  }
  .dialog-actions {
    display: flex;
    gap: 14px;
    padding: 43px 0 0 42px;
  }
  .btn {
    height: 56px;
    font-size: 25px;
    font-weight: 600;
    letter-spacing: -0.4px;
  }
  .primary { width: 129px; background: #0083cf; color: #fff; }
  .ok { width: 97px; background: #e3e3e3; color: #666; }
  .cancel { width: 140px; background: #e3e3e3; color: #666; }

  /* right */
  .right { display: flex; flex-direction: column; min-height: 0; background: #f6f6f6; }
  .filters-top { background: #d3d3d3; }
  .filters-top .kebab { margin-right: 33px; }
  .filter-title {
    height: 64px;
    flex: none;
    background: #eaeaea;
    font-size: 23.5px;
    color: #333;
    padding: 17px 0 0 17px;
  }
  .filter-body { flex: 1; min-height: 0; }
  .level {
    height: 148px;
    padding: 20px 0 0 17px;
    border-bottom: 3px solid #d6d6d6;
  }
  .level-label { display: block; font-size: 21px; color: #666; line-height: 30px; }
  .slider {
    position: relative;
    width: 445px;
    height: 10px;
    margin: 22px 0 0 11px;
    border-radius: 5px;
    background: #3a87d0;
  }
  .knob {
    position: absolute;
    right: -14px;
    top: -8px;
    width: 26px;
    height: 26px;
    border-radius: 50%;
    background: #fff;
    box-shadow: 0 0 3px rgba(0, 0, 0, 0.3);
  }
  .knob::after {
    content: "";
    position: absolute;
    left: 6px;
    top: 6px;
    width: 14px;
    height: 14px;
    border-radius: 50%;
    background: #0083cf;
  }
  .slider-ticks {
    width: 447px;
    margin: 18px 0 0 11px;
    display: flex;
    justify-content: space-between;
  }
  .slider-ticks i { width: 5px; height: 6px; border-radius: 50%; background: #ccc; }
  .custom-head {
    height: 68px;
    flex: none;
    background: #eaeaea;
    border-top: 3px solid #d3d3d3;
    border-bottom: 3px solid #d3d3d3;
    display: flex;
    align-items: center;
    gap: 14px;
    padding-left: 14px;
    font-size: 23px;
    color: #333;
  }
  .custom-head svg { width: 10px; height: 24px; }
  .filter-foot { height: 66px; flex: none; padding: 8px 0 0 22px; }
  .apply-off { width: 130px; background: #0083cf; color: #7cb4e4; }
</style>
